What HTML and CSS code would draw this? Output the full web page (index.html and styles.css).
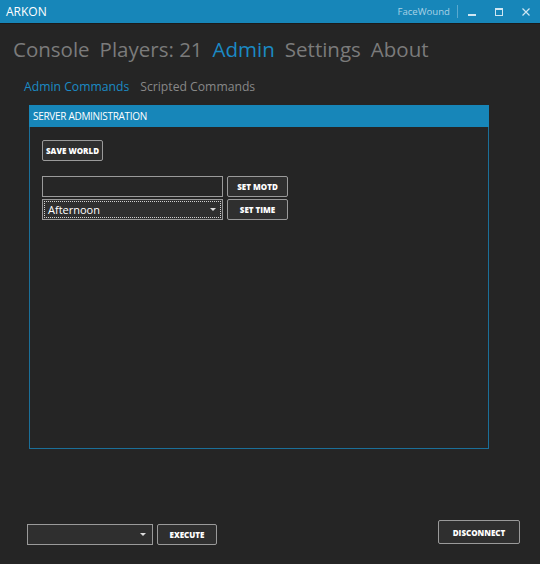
FILE: index.html
```html
<!DOCTYPE html>
<html lang="en">
<head>
  <meta charset="UTF-8">
  <title>ARKON</title>
  <link rel="stylesheet" href="styles.css">
</head>
<body>
  <!-- Window title bar -->
  <div class="titlebar">
    <span class="app-name">ARKON</span>
    <div class="window-tools">
      <span class="user">FaceWound</span>
      <span class="divider"></span>
      <span class="win-btn min"><span></span></span>
      <span class="win-btn max"><span></span></span>
      <span class="win-btn close">
        <svg width="8" height="8" viewBox="0 0 8 8"><path d="M0.5 0.5 L7.5 7.5 M7.5 0.5 L0.5 7.5" stroke="#cfe6f2" stroke-width="1.2"/></svg>
      </span>
    </div>
  </div>

  <div class="nav">
    <span class="nav-item">Console</span>
    <span class="nav-item">Players: 21</span>
    <span class="nav-item active">Admin</span>
    <span class="nav-item">Settings</span>
    <span class="nav-item">About</span>
  </div>

  <div class="subnav">
    <span class="sub-item active">Admin Commands</span>
    <span class="sub-item">Scripted Commands</span>
  </div>

  <div class="panel">
    <div class="panel-header">SERVER ADMINISTRATION</div>
    <div class="panel-body">
      <button class="btn save">SAVE WORLD</button>
      <div class="row first">
        <input class="field" type="text">
        <button class="btn side">SET MOTD</button>
      </div>
      <div class="row">
        <div class="combo focused">
          <span>Afternoon</span>
          <span class="arrow"></span>
        </div>
        <button class="btn side">SET TIME</button>
      </div>
    </div>
  </div>

  <div class="footer">
    <div class="combo command"><span></span><span class="arrow"></span></div>
    <button class="btn execute">EXECUTE</button>
    <button class="btn disconnect">DISCONNECT</button>
  </div>
</body>
</html>
```

FILE: styles.css
```css
/* General */
body {
  margin: 0;
  width: 540px;
  height: 564px;
  background: #252525;
  font-family: "Open Sans", "Noto Sans", sans-serif;
  color: #fff;
  overflow: hidden;
}

/* Title bar */
.titlebar {
  height: 23px;
  background: #1786b9;
  border-bottom: 1px solid #1b1b1b;
  display: flex;
  align-items: center;
  justify-content: space-between;
  padding: 0 10px 0 6px;
}

.app-name {
  font-size: 12px;
  color: #fff;
}

.window-tools {
  display: flex;
  align-items: center;
}

.user {
  font-size: 9.6px;
  color: #a8d2e6;
}

.divider {
  width: 1px;
  height: 13px;
  background: #5aa9cf;
  margin: 0 10px 0 7px;
}

.win-btn {
  width: 8px;
  height: 8px;
  margin-left: 19px;
  position: relative;
}

.win-btn.min {
  margin-left: 0;
}

.min span {
  position: absolute;
  left: 0;
  bottom: 0;
  width: 8px;
  height: 2px;
  background: #cfe6f2;
}

.max {
  box-sizing: border-box;
  border: 1px solid #cfe6f2;
  border-top-width: 2px;
}

.close svg {
  display: block;
}

/* Main navigation */
.nav {
  display: flex;
  gap: 10px;
  padding: 10px 0 0 13px;
  height: 34px;
}

.nav-item {
  font-size: 20.5px;
  line-height: 30px;
  color: #7b7b7b;
}

.nav-item.active {
  color: #1b8ac4;
}

.subnav {
  display: flex;
  gap: 11px;
  padding: 10px 0 0 24px;
  height: 18px;
}

.sub-item {
  font-size: 12.2px;
  line-height: 18px;
  color: #888;
}

.sub-item.active {
  color: #1b8ac4;
}

/* Server administration panel */
.panel {
  margin: 9px 0 0 29px;
  width: 460px;
  height: 344px;
  box-sizing: border-box;
  border: 1px solid #1b6f99;
}

.panel-header {
  height: 22px;
  background: #1786b9;
  font-size: 10px;
  letter-spacing: -0.3px;
  line-height: 22px;
  padding-left: 4px;
  margin: -1px -1px 0 -1px;
}

.panel-body {
  padding: 13px 0 0 12px;
}

.btn {
  box-sizing: border-box;
  background: #2f2f2f;
  border: 1px solid #9a9a9a;
  border-radius: 2px;
  color: #fff;
  font-family: "Open Sans", "Noto Sans", sans-serif;
  font-size: 8px;
  font-weight: 800;
  padding: 0;
  cursor: pointer;
}

.btn.save {
  display: block;
  width: 61px;
  height: 21px;
}

.row {
  display: flex;
  gap: 4px;
  margin-top: 2px;
}

.row.first {
  margin-top: 15px;
}

.field {
  box-sizing: border-box;
  width: 181px;
  height: 21px;
  background: #262626;
  border: 1px solid #9a9a9a;
  margin: 0;
}

.btn.side {
  width: 61px;
  height: 21px;
}

.combo {
  box-sizing: border-box;
  width: 181px;
  height: 21px;
  background: #2f2f2f;
  border: 1px solid #9a9a9a;
  display: flex;
  align-items: center;
  justify-content: space-between;
  padding: 0 6px 0 5px;
  font-size: 11px;
}

.combo.focused {
  outline: 1px dotted #d0d0d0;
  outline-offset: -3px;
}

.arrow {
  width: 0;
  height: 0;
  border-left: 3px solid transparent;
  border-right: 3px solid transparent;
  border-top: 3px solid #ddd;
}

/* Bottom bar */
.footer {
  display: flex;
  align-items: flex-start;
  margin-top: 71px;
  padding: 0 20px 0 27px;
}

.combo.command {
  width: 126px;
  height: 21px;
  margin-top: 4px;
}

.btn.execute {
  width: 60px;
  height: 21px;
  margin: 4px 0 0 4px;
}

.btn.disconnect {
  width: 82px;
  height: 24px;
  margin-left: auto;
}
```
